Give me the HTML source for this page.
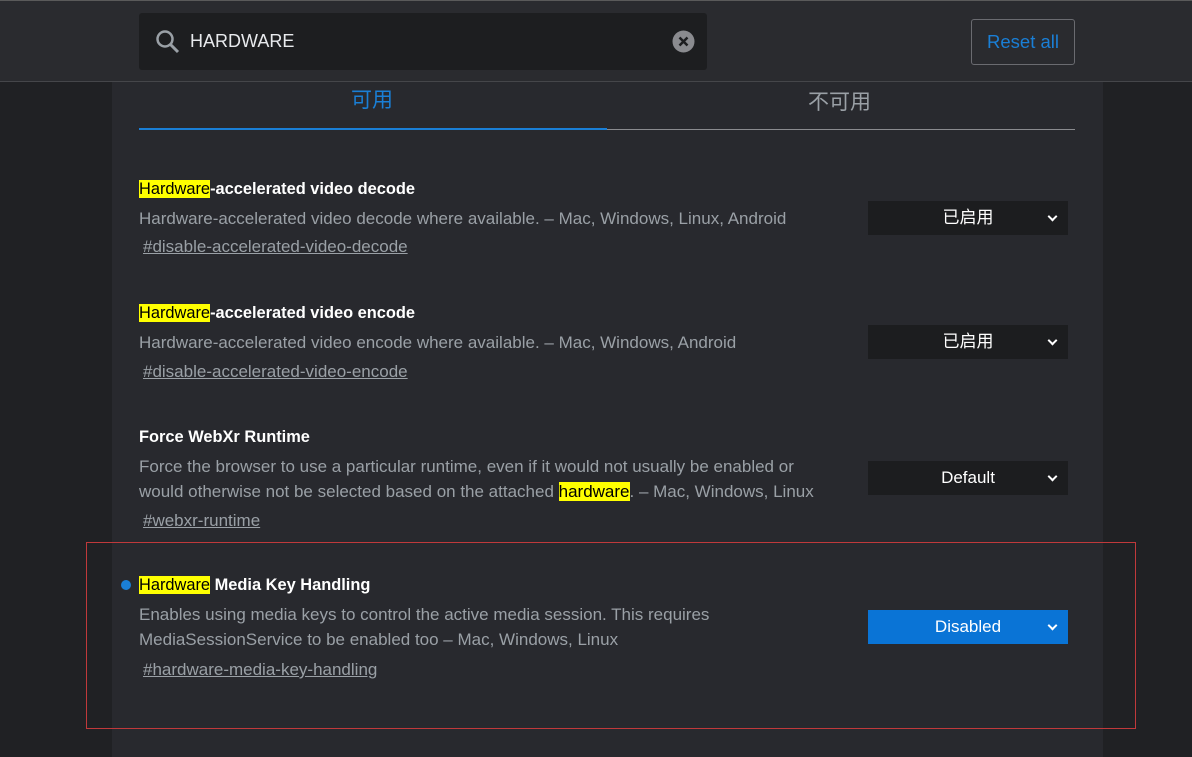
<!DOCTYPE html>
<html><head><meta charset="utf-8"><style>
body{margin:0;width:1192px;height:757px;background:#202124;font-family:"Liberation Sans","Noto Sans CJK SC",sans-serif;position:relative;overflow:hidden}
.panel{position:absolute;left:112px;top:82px;width:991px;height:675px;background:#28292e}
.hdr{position:absolute;left:0;top:0;width:1192px;height:82px;background:#2a2b2f;border-top:1px solid #5a5a5a;box-sizing:border-box;border-bottom:1px solid #45464a}
.search{position:absolute;left:139px;top:12px;width:568px;height:57px;background:#1d1e20;border-radius:3px}
.search span{position:absolute;left:51px;top:18px;color:#e8eaed;font-size:18px}
.reset{position:absolute;left:971px;top:18px;width:104px;height:46px;border:1px solid #6a6b70;border-radius:3px;box-sizing:border-box;color:#1a7fd6;font-size:18.5px;text-align:center;line-height:44px}
.tab{position:absolute;top:84px;font-size:21px}
.t{position:absolute;left:139px;color:#fff;font-weight:bold;font-size:16.4px}
.d{position:absolute;left:139px;color:#9aa0a6;font-size:17px;line-height:25px;width:720px;white-space:nowrap}
.l{position:absolute;left:143px;color:#9aa0a6;font-size:17px;text-decoration:underline}
.hl{background:#ff0;color:#000;font-weight:normal}
.sel{position:absolute;left:868px;width:200px;height:34px;background:#1c1d1f;color:#fff;font-size:17px;text-align:center;line-height:34px}
.sel::after{content:"";position:absolute;right:12px;top:12px;width:5px;height:5px;border-right:2px solid #fff;border-bottom:2px solid #fff;transform:rotate(45deg)}
</style></head><body>
<div class="panel"></div>
<div class="hdr">
<div class="search">
<svg style="position:absolute;left:16px;top:16px" width="26" height="26" viewBox="0 0 26 26"><circle cx="10" cy="10" r="7.5" fill="none" stroke="#9aa0a6" stroke-width="2.5"/><line x1="15.5" y1="15.5" x2="23" y2="23" stroke="#9aa0a6" stroke-width="3"/></svg>
<span>HARDWARE</span>
<svg style="position:absolute;left:533px;top:17px" width="23" height="23" viewBox="0 0 23 23"><circle cx="11.5" cy="11.5" r="11" fill="#8a8b8f"/><path d="M7.5 7.5l8 8M15.5 7.5l-8 8" stroke="#1d1e20" stroke-width="2.5"/></svg>
</div>
<div class="reset">Reset all</div>
</div>
<div class="tab" style="left:351px;color:#1a7fd6">可用</div>
<div class="tab" style="left:808px;top:86px;color:#9aa0a6">不可用</div>
<div style="position:absolute;left:139px;top:128px;width:468px;height:2px;background:#1a7fd6"></div>
<div style="position:absolute;left:607px;top:129px;width:468px;height:1px;background:#8a8b8f"></div>

<div class="t" style="top:180px"><span class="hl">Hardware</span>-accelerated video decode</div>
<div class="d" style="top:206px">Hardware-accelerated video decode where available. – Mac, Windows, Linux, Android</div>
<div class="l" style="top:237px">#disable-accelerated-video-decode</div>
<div class="sel" style="top:201px">已启用</div>

<div class="t" style="top:304px"><span class="hl">Hardware</span>-accelerated video encode</div>
<div class="d" style="top:330px">Hardware-accelerated video encode where available. – Mac, Windows, Android</div>
<div class="l" style="top:362px">#disable-accelerated-video-encode</div>
<div class="sel" style="top:325px">已启用</div>

<div class="t" style="top:428px">Force WebXr Runtime</div>
<div class="d" style="top:454px">Force the browser to use a particular runtime, even if it would not usually be enabled or<br>would otherwise not be selected based on the attached <span class="hl">hardware</span>. – Mac, Windows, Linux</div>
<div class="l" style="top:511px">#webxr-runtime</div>
<div class="sel" style="top:461px">Default</div>

<div style="position:absolute;left:86px;top:542px;width:1050px;height:187px;border:1px solid #c0393b;box-sizing:border-box"></div>
<div style="position:absolute;left:121px;top:580px;width:10px;height:10px;border-radius:50%;background:#1a7fd6"></div>
<div class="t" style="top:576px"><span class="hl">Hardware</span> Media Key Handling</div>
<div class="d" style="top:602px">Enables using media keys to control the active media session. This requires<br>MediaSessionService to be enabled too – Mac, Windows, Linux</div>
<div class="l" style="top:660px">#hardware-media-key-handling</div>
<div class="sel" style="top:610px;background:#0a74d6">Disabled</div>
</body></html>
